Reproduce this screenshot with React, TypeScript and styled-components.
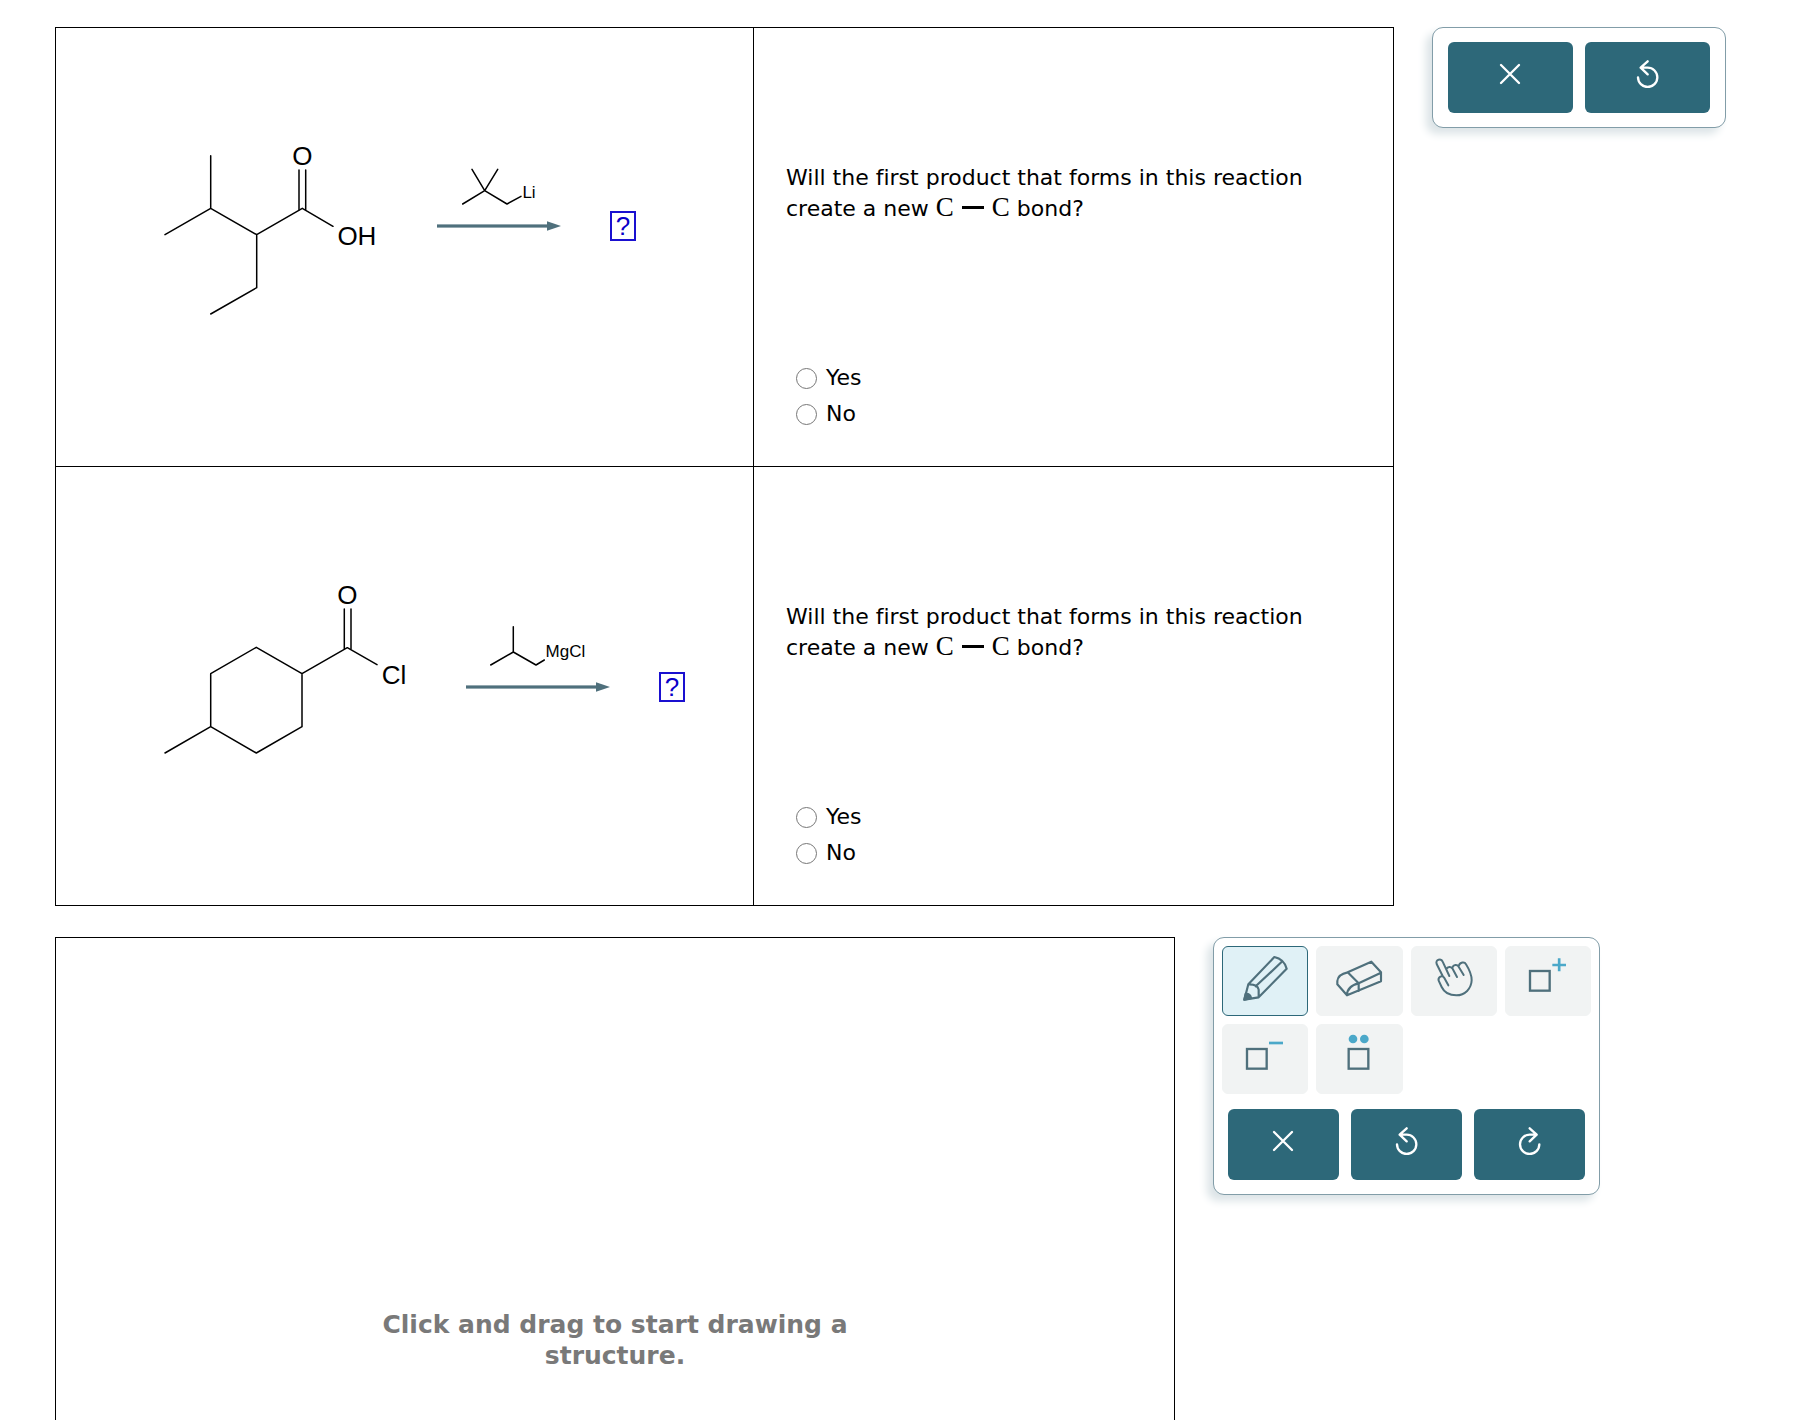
import React from 'react';
import styled, { createGlobalStyle } from 'styled-components';

const GlobalStyle = createGlobalStyle`
  *, *::before, *::after { box-sizing: border-box; }
  body {
    margin: 0;
    background: #fff;
    color: #000;
    font-family: Verdana, "DejaVu Sans", sans-serif;
    font-variant-ligatures: none;
  }
`;

const Page = styled.main`
  height: 100vh;
  overflow: hidden;
  padding: 27px 88px 0 55px;
  display: flex;
  flex-direction: column;
  gap: 31px;
`;

const Section = styled.section<{ $inset?: number }>`
  flex: none;
  display: flex;
  align-items: flex-start;
  gap: 38px;
  padding-right: ${(p) => p.$inset ?? 0}px;
`;

const ReactionTable = styled.table`
  flex: 1;
  min-width: 0;
  display: grid;
  border: 1px solid #000;
  border-bottom: 0;
`;

const TableBody = styled.tbody`
  display: grid;
`;

const Row = styled.tr`
  display: grid;
  grid-template-columns: 698fr 639fr;
  min-height: 439px;
  border-bottom: 1px solid #000;
`;

const SchemeCell = styled.td`
  padding: 109px 0 0 108px;
  border-right: 1px solid #000;
`;

const QuestionCell = styled.td`
  padding: 134px 32px 30px;
`;

const Scheme = styled.div`
  display: flex;
  align-items: center;
  gap: 48px;
`;

const Drawing = styled.svg`
  flex: none;
  display: block;
  fill: none;
  stroke: #000;
  stroke-width: 1.5;
  stroke-linecap: round;
  stroke-linejoin: round;

  text {
    fill: #000;
    stroke: none;
    font-family: "Liberation Sans", Arial, sans-serif;
  }
`;

const Unknown = styled.span`
  flex: none;
  width: 26px;
  height: 30px;
  border: 2px solid #1a10d0;
  color: #0a00c8;
  font: 26px/26px "Liberation Sans", Arial, sans-serif;
  text-align: center;
`;

const Question = styled.p`
  margin: 0 0 136px;
  max-width: 560px;
  font-size: 22px;
  line-height: 31px;
`;

const Formula = styled.span`
  display: inline-flex;
  align-items: center;
  gap: 8px;
  height: 24px;
  font-family: "Liberation Serif", "Times New Roman", serif;
  font-size: 27px;
  line-height: 24px;
`;

const Bond = styled.span`
  width: 22px;
  height: 3px;
  background: #000;
`;

const Options = styled.div`
  padding-left: 10px;
`;

const Option = styled.label`
  display: flex;
  align-items: center;
  gap: 9px;
  height: 36px;
  font-size: 22px;
  line-height: 36px;
`;

const Radio = styled.input`
  width: 21px;
  height: 21px;
  margin: 0;
`;

const Panel = styled.div<{ $width: number; $pad: string }>`
  flex: none;
  width: ${(p) => p.$width}px;
  padding: ${(p) => p.$pad};
  border: 1px solid #829da8;
  border-radius: 11px;
  background: #fff;
  box-shadow: -6px 6px 9px #dce4e7;
`;

const Tools = styled.div`
  display: grid;
  grid-template-columns: repeat(4, 1fr);
  gap: 8px;
  margin-bottom: 15px;
`;

const ToolButton = styled.button<{ $active?: boolean }>`
  display: flex;
  align-items: center;
  justify-content: center;
  height: 70px;
  padding: 0 0 4px;
  border: 1px solid ${(p) => (p.$active ? '#2d6879' : '#f1f3f3')};
  border-radius: 6px;
  background: ${(p) => (p.$active ? '#e0f1f6' : '#f1f3f3')};
`;

const ToolIcon = styled.svg`
  width: 48px;
  height: 48px;
  fill: none;
  stroke: #4f707c;
  stroke-width: 7;
  stroke-linecap: round;
  stroke-linejoin: round;
`;

const Actions = styled.div<{ $inset?: number }>`
  display: flex;
  gap: 12px;
  padding: 0 ${(p) => p.$inset ?? 0}px;
`;

const ActionButton = styled.button`
  flex: 1;
  display: flex;
  align-items: center;
  justify-content: center;
  height: 71px;
  padding: 0 2px 8px 0;
  border: 0;
  border-radius: 6px;
  background: #2d6879;
`;

const ActionIcon = styled.svg`
  width: 28px;
  height: 28px;
  fill: none;
  stroke: #fff;
  stroke-width: 7;
  stroke-linecap: round;
  stroke-linejoin: round;
`;

const Canvas = styled.div`
  flex: 1;
  min-width: 0;
  height: 806px;
  display: flex;
  align-items: center;
  justify-content: center;
  border: 1px solid #000;
`;

const Hint = styled.p`
  margin: 0;
  max-width: 500px;
  color: #797979;
  font-size: 25px;
  font-weight: 700;
  line-height: 31px;
  text-align: center;
`;

const TEAL = '#4f707c';
const BLUE = '#4ba8c9';

function Arrow({ from, to, y }: { from: number; to: number; y: number }) {
  return (
    <g stroke="none" fill={TEAL}>
      <rect x={from} y={y - 1.6} width={to - from - 12} height={3.2} />
      <path d={`M${to - 14} ${y - 4.7} L${to} ${y} L${to - 14} ${y + 4.7} Z`} />
    </g>
  );
}

function AcidScheme() {
  return (
    <Scheme>
      <Drawing width="225" height="178" viewBox="164 137 225 178">
        <path d="M210.7 155.7V208.3L165 234.7M210.7 208.3L256.7 234.7L302.3 208.3L333 226.3M256.7 234.7V287.7L210.7 314" />
        <path d="M299 170V209.5M305.7 170V209.5" />
        <text x="302.3" y="164.7" fontSize="26" textAnchor="middle">O</text>
        <text x="337.4" y="244.7" fontSize="26">OH</text>
      </Drawing>
      <Drawing width="125" height="178" viewBox="437 137 125 178">
        <path d="M472 169.3L484.7 190.7L497.7 169.3M462.7 204L484.7 190.7L507 204L521 196.3" />
        <text x="522.4" y="197.8" fontSize="17">Li</text>
        <Arrow from={437} to={561} y={226} />
      </Drawing>
      <Unknown>?</Unknown>
    </Scheme>
  );
}

function ChlorideScheme() {
  return (
    <Scheme>
      <Drawing width="253" height="222" viewBox="164 576 253 222">
        <path d="M256.3 647.3L302 673.7V726.7L256.3 753L210.7 726.7V673.7ZM210.7 726.7L165 753M302 673.7L347.3 647.7L377 664.7" />
        <path d="M344.3 609V648.7M351 609V648.7" />
        <text x="347.3" y="603.7" fontSize="26" textAnchor="middle">O</text>
        <text x="381.7" y="683.7" fontSize="26">Cl</text>
      </Drawing>
      <Drawing width="146" height="222" viewBox="465 576 146 222">
        <path d="M513.3 626.7V652L490.7 665M513.3 652L536 665L544.3 660" />
        <text x="545.6" y="657" fontSize="17">MgCl</text>
        <Arrow from={466} to={610} y={687} />
      </Drawing>
      <Unknown>?</Unknown>
    </Scheme>
  );
}

function ReactionRow({ name, children }: { name: string; children: React.ReactNode }) {
  return (
    <Row>
      <SchemeCell>{children}</SchemeCell>
      <QuestionCell>
        <Question>
          Will the first product that forms in this reaction create a new{' '}
          <Formula>
            <span>C</span>
            <Bond />
            <span>C</span>
          </Formula>{' '}
          bond?
        </Question>
        <Options>
          {['Yes', 'No'].map((answer) => (
            <Option key={answer} htmlFor={`${name}-${answer}`}>
              <Radio type="radio" name={name} id={`${name}-${answer}`} />
              {answer}
            </Option>
          ))}
        </Options>
      </QuestionCell>
    </Row>
  );
}

function ClearButton() {
  return (
    <ActionButton type="button" aria-label="Clear">
      <ActionIcon viewBox="0 0 84 84"><path d="M15 15L69 69M69 15L15 69" /></ActionIcon>
    </ActionButton>
  );
}

function TurnButton({ redo }: { redo?: boolean }) {
  return (
    <ActionButton type="button" aria-label={redo ? 'Redo' : 'Undo'}>
      <ActionIcon viewBox="0 0 84 84">
        <g transform={redo ? 'translate(88 0) scale(-1 1)' : undefined}>
          <path d="M15 52A29 29 0 1 0 44 23H24M44 4L23 23L44 43" />
        </g>
      </ActionIcon>
    </ActionButton>
  );
}

const tools: { label: string; icon: React.ReactNode }[] = [
  {
    label: 'Draw',
    icon: (
      <>
        <path strokeWidth="6.5" d="M10 134L22 88L100 6Q129 12 137 41L53 127ZM22 88Q50 87 53 104V127M44 94L124 19" />
        <path d="M14 117Q27 116 30 129L10 134Z" fill={TEAL} />
      </>
    ),
  },
  {
    label: 'Erase',
    icon: (
      <path
        strokeWidth="6.5"
        d="M38 52L109 20L138 52V79L36 121L7 88V78Q9 58 38 52L71 85L138 53M71 85V108M36 121Q36 93 71 85"
      />
    ),
  },
  {
    label: 'Move',
    icon: (
      <path
        strokeWidth="6"
        d="M38 63L20 27C15 13 34 9 38 20L58 63M49 42C53 34 63 34 67 40L81 66M67 38C70 28 82 28 85 34L101 60M86 33C90 21 104 19 108 28C120 47 125 59 125 76C124 101 105 121 79 121C57 121 42 111 35 96L26 77C23 66 37 58 43 69L55 91"
      />
    ),
  },
  {
    label: 'Positive charge',
    icon: (
      <g strokeLinecap="butt" strokeLinejoin="miter">
        <rect x="18" y="48" width="59" height="59" />
        <path d="M85 30H126M105.5 10V49" stroke={BLUE} strokeWidth="8" />
      </g>
    ),
  },
  {
    label: 'Negative charge',
    icon: (
      <g strokeLinecap="butt" strokeLinejoin="miter">
        <rect x="18" y="48" width="59" height="59" />
        <path d="M84 30H126" stroke={BLUE} strokeWidth="8" />
      </g>
    ),
  },
  {
    label: 'Lone pair',
    icon: (
      <g strokeLinejoin="miter">
        <rect x="41" y="48" width="59" height="59" />
        <g fill={BLUE} stroke="none">
          <circle cx="54" cy="18" r="13" />
          <circle cx="88" cy="18" r="13" />
        </g>
      </g>
    ),
  },
];

export default function App() {
  return (
    <>
      <GlobalStyle />
      <Page>
        <Section>
          <ReactionTable>
            <TableBody>
              <ReactionRow name="acid"><AcidScheme /></ReactionRow>
              <ReactionRow name="chloride"><ChlorideScheme /></ReactionRow>
            </TableBody>
          </ReactionTable>
          <Panel $width={294} $pad="14px 15px">
            <Actions>
              <ClearButton />
              <TurnButton />
            </Actions>
          </Panel>
        </Section>
        <Section $inset={126}>
          <Canvas>
            <Hint>Click and drag to start drawing a structure.</Hint>
          </Canvas>
          <Panel $width={387} $pad="8px 8px 14px">
            <Tools>
              {tools.map((tool, i) => (
                <ToolButton key={tool.label} type="button" aria-label={tool.label} $active={i === 0}>
                  <ToolIcon viewBox="0 0 144 144">{tool.icon}</ToolIcon>
                </ToolButton>
              ))}
            </Tools>
            <Actions $inset={6}>
              <ClearButton />
              <TurnButton />
              <TurnButton redo />
            </Actions>
          </Panel>
        </Section>
      </Page>
    </>
  );
}
